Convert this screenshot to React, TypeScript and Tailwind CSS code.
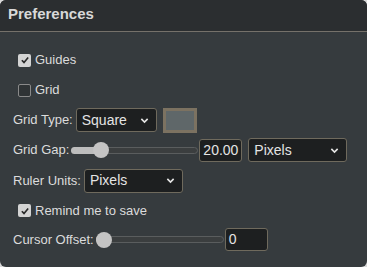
import React from "react";

const font = { fontFamily: '"Liberation Sans", Arial, sans-serif' };

const Check = ({ checked }: { checked: boolean }) => (
    <span
        className={
            "ml-[5px] mr-[4px] flex h-[13px] w-[13px] shrink-0 items-center justify-center rounded-[2px] " +
            (checked ? "bg-[#d4d4d4]" : "border border-[#8a8a8a] bg-[#2f3335]")
        }
    >
        {checked && (
            <svg viewBox="0 0 12 12" className="h-[10px] w-[10px]">
                <path d="M2.2 6.3 L4.8 8.9 L9.8 3" fill="none" stroke="#2a2a2a" strokeWidth="2" />
            </svg>
        )}
    </span>
);

const Chevron = () => (
    <svg viewBox="0 0 10 10" className="h-[9px] w-[9px]">
        <path d="M1.5 3.2 L5 6.7 L8.5 3.2" fill="none" stroke="#e6e6e6" strokeWidth="1.8" />
    </svg>
);

const Select = ({ value, w }: { value: string; w: string }) => (
    <div
        className={
            "flex h-[24px] items-center justify-between rounded-[3px] border border-[#6f6a5d] bg-[#1d1f20] pl-[5px] pr-[7px] text-[14px] text-[#e4e4e4] " +
            w
        }
    >
        <span>{value}</span>
        <Chevron />
    </div>
);

const Slider = ({ w, pos }: { w: string; pos: number }) => (
    <div className={"relative flex h-[16px] items-center " + w}>
        <div className="h-[7px] w-full rounded-full border border-[#5a5d5e] bg-[#3b3e3f]" />
        <div
            className="absolute left-0 h-[7px] rounded-full bg-[#bdbdbd]"
            style={{ width: pos + 8 }}
        />
        <div
            className="absolute h-[16px] w-[16px] rounded-full bg-[#c4c4c4]"
            style={{ left: pos }}
        />
    </div>
);

const NumInput = ({ value }: { value: string }) => (
    <div className="flex h-[23px] w-[43px] items-center rounded-[3px] border border-[#6f6a5d] bg-[#1d1f20] pl-[3px] text-[14px] text-[#e4e4e4]">
        {value}
    </div>
);

export default function App() {
    return (
        <div className="h-[267px] w-[367px] bg-[#d9d9d9]" style={font}>
            <div className="flex h-full w-full flex-col overflow-hidden rounded-[6px] bg-[#363b3e] text-[13px] text-[#dcdcdc]">
                <div className="flex h-[32px] items-center border-b border-[#75716a] bg-[#2b2e30] pl-[8px] pb-[2px] text-[15px] font-bold text-[#d8d8d8]">
                    Preferences
                </div>
                <div className="flex flex-col pt-[13px] pl-[13px]">
                    <div className="flex h-[30px] items-center">
                        <Check checked />
                        <span>Guides</span>
                    </div>
                    <div className="flex h-[30px] items-center">
                        <Check checked={false} />
                        <span>Grid</span>
                    </div>
                    <div className="flex h-[30px] items-center">
                        <span className="mr-[3px]">Grid Type:</span>
                        <Select value="Square" w="w-[81px]" />
                        <div className="ml-[6px] h-[25px] w-[34px] border-[3px] border-[#7c7261] bg-[#5f6769]" />
                    </div>
                    <div className="flex h-[30px] items-center">
                        <span className="mr-[2px]">Grid Gap:</span>
                        <Slider w="w-[127px]" pos={22} />
                        <div className="ml-[1px]">
                            <NumInput value="20.00" />
                        </div>
                        <div className="ml-[6px]">
                            <Select value="Pixels" w="w-[99px]" />
                        </div>
                    </div>
                    <div className="flex h-[31px] items-center">
                        <span className="mr-[3px]">Ruler Units:</span>
                        <Select value="Pixels" w="w-[99px]" />
                    </div>
                    <div className="flex h-[29px] items-center">
                        <Check checked />
                        <span>Remind me to save</span>
                    </div>
                    <div className="flex h-[29px] items-center">
                        <span className="mr-[2px]">Cursor Offset:</span>
                        <Slider w="w-[128px]" pos={0} />
                        <div className="ml-[1px]">
                            <NumInput value="0" />
                        </div>
                    </div>
                </div>
            </div>
        </div>
    );
}
